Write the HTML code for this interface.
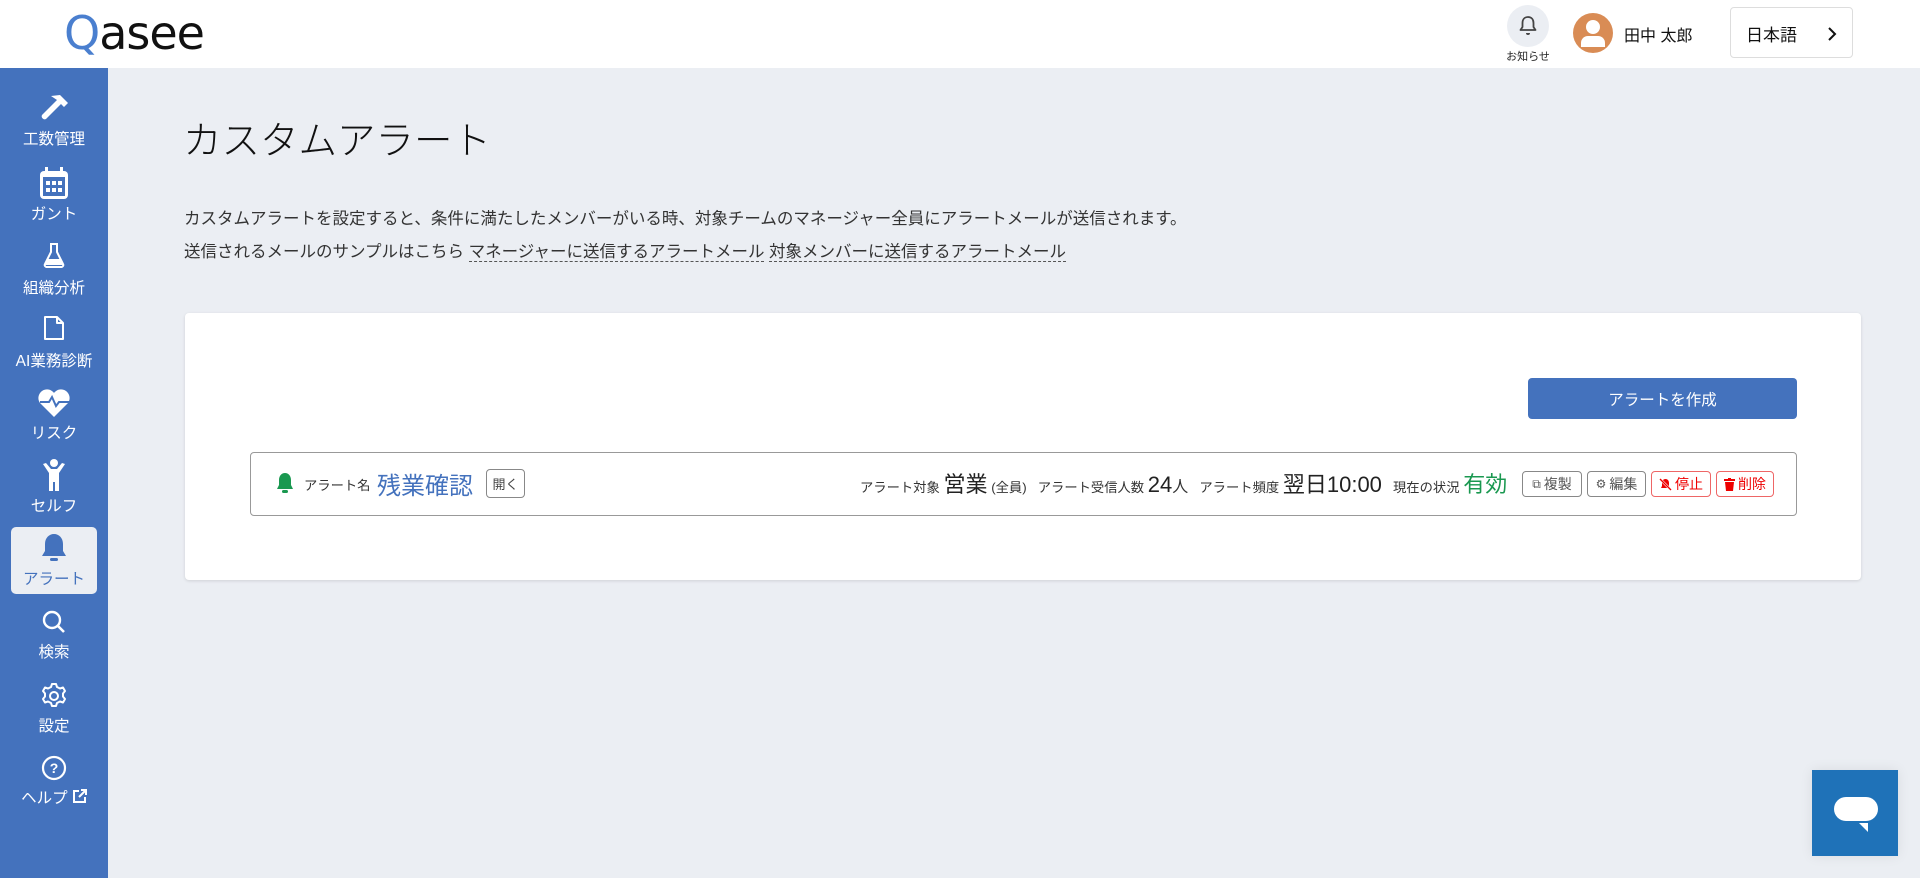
<!DOCTYPE html>
<html><head><meta charset="utf-8">
<style>
*{margin:0;padding:0;box-sizing:border-box}
body{width:1920px;height:878px;overflow:hidden;background:#ebeef3;font-family:"Liberation Sans","Noto Sans CJK JP",sans-serif;color:#222;position:relative}
.hdr{position:absolute;left:0;top:0;width:1920px;height:68px;background:#fff}
.side{position:absolute;left:0;top:68px;width:108px;height:810px;background:#4472bd}
.ic{position:absolute;left:0;width:108px;display:flex;justify-content:center}
.lb{position:absolute;left:0;width:108px;text-align:center;color:#fff;font-size:15.5px;line-height:18px}
.abs{position:absolute}
.btn{position:absolute;top:471px;height:26px;border:1px solid #888;border-radius:4px;font-size:14px;display:flex;align-items:center;justify-content:center;gap:3px;color:#555;background:#fff}
.red{color:#e00;border-color:#e66}
.sm{font-size:13.3px;color:#333}
.big{font-size:22px;color:#222}
a{color:#333;text-decoration:none;border-bottom:1.5px dashed #555}
</style></head><body>
<div class="hdr">
  <div class="abs" style="left:64px;top:6px;font-size:46px;line-height:54px;letter-spacing:-1px;font-family:'DejaVu Sans','Liberation Sans',sans-serif;"><span style="color:#4a7fcf">Q</span><span style="color:#111">asee</span></div>
  <div class="abs" style="left:1507px;top:5px;width:42px;height:42px;border-radius:50%;background:#ebeef3;display:flex;align-items:center;justify-content:center">
    <svg width="20" height="22" viewBox="0 0 20 22"><path d="M10 2c-3.5 0-5.5 2.5-5.5 6v4l-2 3h15l-2-3V8c0-3.5-2-6-5.5-6z" fill="none" stroke="#444" stroke-width="1.8" stroke-linejoin="round"/><path d="M8 18a2 2 0 004 0" fill="#444"/></svg>
  </div>
  <div class="abs" style="left:1500px;top:48px;width:56px;text-align:center;font-size:11px;color:#222">お知らせ</div>
  <div class="abs" style="left:1573px;top:13px;width:40px;height:40px;border-radius:50%;background:#d98c55;overflow:hidden">
    <div class="abs" style="left:13px;top:7px;width:14px;height:14px;border-radius:50%;background:#fff"></div>
    <div class="abs" style="left:8px;top:23px;width:24px;height:11px;border-radius:7px 7px 0 0;background:#fff"></div>
  </div>
  <div class="abs" style="left:1624px;top:22px;font-size:16px;color:#111">田中 太郎</div>
  <div class="abs" style="left:1730px;top:7px;width:123px;height:51px;border:1px solid #ddd;border-radius:4px;background:#fff">
    <div class="abs" style="left:15px;top:13px;font-size:17px;color:#111">日本語</div>
    <svg class="abs" style="left:96px;top:18px" width="10" height="16" viewBox="0 0 10 16"><path d="M2 2l6 6-6 6" fill="none" stroke="#111" stroke-width="2"/></svg>
  </div>
</div>

<div class="side">
  <div class="ic" style="top:24px"><svg width="34" height="34" viewBox="0 0 34 34"><path d="M14 4l9-1 8 8-4 4-3-3-15 15a3 3 0 01-4-4l15-15-6-4z" fill="#fff"/></svg></div>
  <div class="lb" style="top:63px">工数管理</div>
  <div class="ic" style="top:98px"><svg width="30" height="34" viewBox="0 0 30 34"><rect x="1" y="5" width="28" height="28" rx="4" fill="#fff"/><rect x="6" y="1" width="3" height="7" fill="#fff"/><rect x="21" y="1" width="3" height="7" fill="#fff"/><rect x="4" y="11" width="22" height="19" fill="#4472bd"/><g fill="#fff"><rect x="7" y="15" width="4" height="4"/><rect x="13" y="15" width="4" height="4"/><rect x="19" y="15" width="4" height="4"/><rect x="7" y="22" width="4" height="4"/><rect x="13" y="22" width="4" height="4"/><rect x="19" y="22" width="4" height="4"/></g></svg></div>
  <div class="lb" style="top:138px">ガント</div>
  <div class="ic" style="top:174px"><svg width="22" height="26" viewBox="0 0 22 26"><path d="M7 2h8M8 2v8L2 22a2 2 0 002 3h14a2 2 0 002-3L14 10V2" fill="none" stroke="#fff" stroke-width="2"/><path d="M5 17h12l3 6H2z" fill="#fff"/></svg></div>
  <div class="lb" style="top:212px">組織分析</div>
  <div class="ic" style="top:247px"><svg width="22" height="26" viewBox="0 0 22 26"><path d="M2 2h12l6 6v16H2z M14 2v6h6" fill="none" stroke="#fff" stroke-width="2" stroke-linejoin="round"/></svg></div>
  <div class="lb" style="top:285px">AI業務診断</div>
  <div class="ic" style="top:320px"><svg width="34" height="30" viewBox="0 0 34 30"><path d="M17 29L3 15A8 8 0 0117 5a8 8 0 0114 10z" fill="#fff"/><path d="M3 14h9l3-5 4 9 3-4h10" fill="none" stroke="#4472bd" stroke-width="2"/></svg></div>
  <div class="lb" style="top:357px">リスク</div>
  <div class="ic" style="top:390px"><svg width="26" height="34" viewBox="0 0 26 34"><circle cx="13" cy="5" r="4" fill="#fff"/><path d="M2 6l3-1 5 6h6l5-6 3 1-6 9v18h-4v-9h-2v9H8V15z" fill="#fff"/></svg></div>
  <div class="lb" style="top:430px">セルフ</div>
  <div class="abs" style="left:11px;top:459px;width:86px;height:67px;background:#ebeef3;border-radius:5px"></div>
  <div class="ic" style="top:464px"><svg width="28" height="32" viewBox="0 0 28 32"><path d="M14 2c-5 0-9 4-9 10v7l-3 5h24l-3-5v-7c0-6-4-10-9-10z" fill="#4472bd"/><rect x="10" y="26" width="8" height="3" rx="1.5" fill="#4472bd"/></svg></div>
  <div class="lb" style="top:503px;color:#4472bd">アラート</div>
  <div class="ic" style="top:541px"><svg width="26" height="26" viewBox="0 0 26 26"><circle cx="11" cy="11" r="8" fill="none" stroke="#fff" stroke-width="2.4"/><path d="M17 17l6 6" stroke="#fff" stroke-width="2.6"/></svg></div>
  <div class="lb" style="top:576px">検索</div>
  <div class="ic" style="top:614px"><svg width="28" height="28" viewBox="0 0 28 28"><path d="M12 2h4l1 3 3 1.5 3-1 2 3.5-2 2.5v3l2 2.5-2 3.5-3-1-3 1.5-1 3h-4l-1-3-3-1.5-3 1-2-3.5 2-2.5v-3l-2-2.5 2-3.5 3 1 3-1.5z" fill="none" stroke="#fff" stroke-width="2" stroke-linejoin="round"/><circle cx="14" cy="14" r="4" fill="none" stroke="#fff" stroke-width="2"/></svg></div>
  <div class="lb" style="top:650px">設定</div>
  <div class="ic" style="top:687px"><svg width="26" height="26" viewBox="0 0 26 26"><circle cx="13" cy="13" r="11" fill="none" stroke="#fff" stroke-width="2.2"/><text x="13" y="18" text-anchor="middle" font-size="14" font-weight="bold" fill="#fff" font-family="Liberation Sans">?</text></svg></div>
  <div class="lb" style="top:721px">ヘルプ <svg width="15" height="15" viewBox="0 0 15 15" style="vertical-align:-1px"><path d="M7 2H2v11h11V8" fill="none" stroke="#fff" stroke-width="2"/><path d="M9 1h5v5M14 1L7 8" fill="none" stroke="#fff" stroke-width="2"/></svg></div>
</div>

<div class="abs" style="left:183px;top:116px;font-size:38.5px;font-weight:300;color:#111;line-height:52px">カスタムアラート</div>
<div class="abs" style="left:184px;top:205px;font-size:16.5px;color:#333">カスタムアラートを設定すると、条件に満たしたメンバーがいる時、対象チームのマネージャー全員にアラートメールが送信されます。</div>
<div class="abs" style="left:184px;top:238px;font-size:16.5px;color:#333">送信されるメールのサンプルはこちら <a>マネージャーに送信するアラートメール</a> <a>対象メンバーに送信するアラートメール</a></div>

<div class="abs" style="left:185px;top:313px;width:1676px;height:267px;background:#fff;border-radius:4px;box-shadow:0 1px 3px rgba(0,0,0,.12)"></div>
<div class="abs" style="left:1528px;top:378px;width:269px;height:41px;background:#4472bd;border-radius:4px;color:#fff;font-size:15.5px;display:flex;align-items:center;justify-content:center">アラートを作成</div>

<div class="abs" style="left:250px;top:452px;width:1547px;height:64px;border:1px solid #999;border-radius:4px;background:#fff"></div>
<svg class="abs" style="left:276px;top:472px" width="18" height="22" viewBox="0 0 18 22"><path d="M9 1c-3.5 0-6 3-6 7v5l-2 4h16l-2-4V8c0-4-2.5-7-6-7z" fill="#1a9850"/><rect x="6" y="18" width="6" height="3" rx="1.5" fill="#1a9850"/></svg>
<div class="abs sm" style="left:304px;top:475px">アラート名</div>
<div class="abs" style="left:377px;top:466px;font-size:24px;color:#4472bd">残業確認</div>
<div class="abs" style="left:486px;top:469px;width:39px;height:29px;border:1px solid #888;border-radius:4px;font-size:13px;color:#444;display:flex;align-items:center;justify-content:center">開く</div>

<div class="abs" style="left:860px;top:467px;white-space:nowrap;display:flex;align-items:baseline;gap:0">
  <span class="sm">アラート対象&nbsp;</span><span class="big">営業</span><span class="sm">&nbsp;(全員)&nbsp;&nbsp;&nbsp;アラート受信人数&nbsp;</span><span class="big">24</span><span class="sm" style="font-size:16px">人</span><span class="sm">&nbsp;&nbsp;&nbsp;アラート頻度&nbsp;</span><span class="big">翌日10:00</span><span class="sm">&nbsp;&nbsp;&nbsp;現在の状況&nbsp;</span><span class="big" style="color:#1a9850">有効</span>
</div>
<div class="btn" style="left:1522px;width:60px"><span style="font-size:12px">⧉</span>複製</div>
<div class="btn" style="left:1587px;width:59px"><span style="font-size:12px">⚙</span>編集</div>
<div class="btn red" style="left:1651px;width:60px"><svg width="13" height="13" viewBox="0 0 13 13"><path d="M6.5 1C4.5 1 3 2.5 3 5v3l-1 2h9l-1-2V5C10 2.5 8.5 1 6.5 1z" fill="#e00"/><path d="M1 1l11 11" stroke="#fff" stroke-width="2.5"/><path d="M1 1l11 11" stroke="#e00" stroke-width="1.3"/></svg>停止</div>
<div class="btn red" style="left:1716px;width:58px"><svg width="11" height="13" viewBox="0 0 11 13"><rect x="0" y="1" width="11" height="2" fill="#e00"/><rect x="4" y="0" width="3" height="2" fill="#e00"/><path d="M1 4h9l-1 9H2z" fill="#e00"/></svg>削除</div>

<div class="abs" style="left:1812px;top:770px;width:86px;height:86px;background:#1f72b8;box-shadow:0 0 12px rgba(0,0,0,.08)">
  <div class="abs" style="left:22px;top:27px;width:44px;height:24px;border-radius:12px;background:#fff"></div>
  <svg class="abs" style="left:47px;top:53px" width="10" height="10" viewBox="0 0 10 10"><path d="M0 0h9v9z" fill="#fff"/></svg>
</div>
</body></html>
